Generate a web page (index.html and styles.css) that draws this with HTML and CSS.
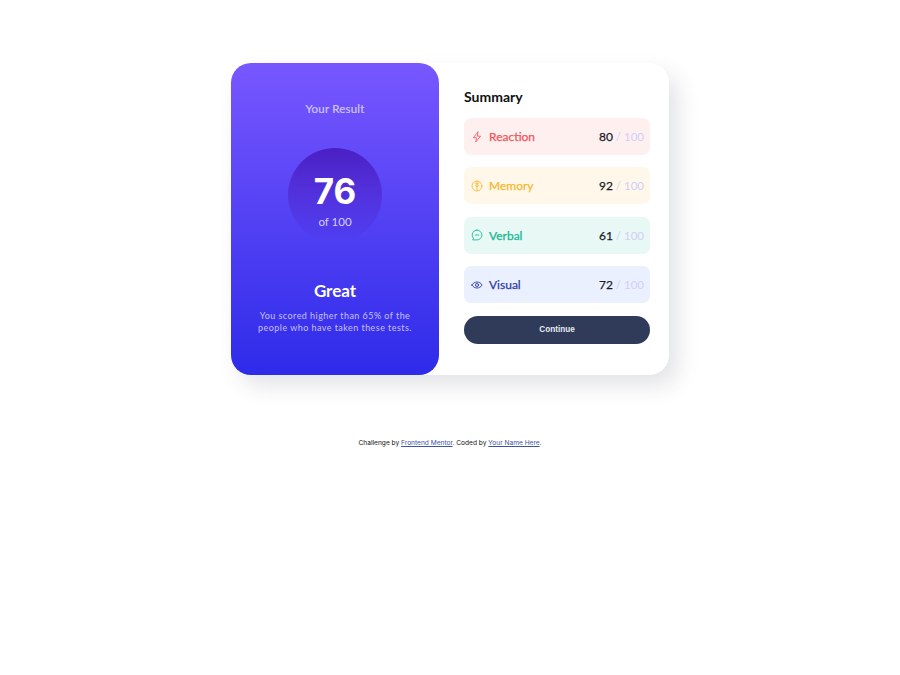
FILE: index.html
```html
<!DOCTYPE html>
<html lang="en">
<head>
<meta charset="utf-8">
<title>Results summary</title>
<link rel="stylesheet" href="styles.css">
</head>
<body>
<main class="card">
  <section class="result">
    <h1 class="result-title">Your Result</h1>
    <div class="score">
      <span class="score-value">76</span>
      <span class="score-of">of 100</span>
    </div>
    <h2 class="verdict">Great</h2>
    <p class="verdict-text">You scored higher than 65% of the people who have taken these tests.</p>
  </section>
  <section class="summary">
    <h2 class="summary-title">Summary</h2>
    <ul class="rows">
      <li class="row row-red">
        <svg class="icon" viewBox="0 0 20 20" fill="none" stroke="currentColor" stroke-width="1.4" stroke-linecap="round" stroke-linejoin="round"><path d="M11.500 1.800 4 11.200h5L8 18.200l8-9.600h-5.300L11.500 1.800Z"/></svg>
        <span class="row-label">Reaction</span>
        <span class="row-score"><b>80</b><i>/ 100</i></span>
      </li>
      <li class="row row-yellow">
        <svg class="icon" viewBox="0 0 20 20" fill="none" stroke="currentColor" stroke-width="1.4" stroke-linecap="round" stroke-linejoin="round"><circle cx="10" cy="10" r="8.300"/><path d="M10 2.500v15M10 7 7 5M10 7l3-2M10 11l3-2M10 11 7 9"/></svg>
        <span class="row-label">Memory</span>
        <span class="row-score"><b>92</b><i>/ 100</i></span>
      </li>
      <li class="row row-green">
        <svg class="icon" viewBox="0 0 20 20" fill="none" stroke="currentColor" stroke-width="1.4" stroke-linecap="round" stroke-linejoin="round"><path d="M10 1.800a8.200 8.200 0 0 1 0 16.400H2.800l1.500-2.400A8.200 8.200 0 0 1 10 1.800Z"/><path d="M7 10h6"/></svg>
        <span class="row-label">Verbal</span>
        <span class="row-score"><b>61</b><i>/ 100</i></span>
      </li>
      <li class="row row-blue">
        <svg class="icon" viewBox="0 0 20 20" fill="none" stroke="currentColor" stroke-width="1.500" stroke-linecap="round" stroke-linejoin="round"><path d="M1.500 10C3.500 6.600 6.500 5 10 5s6.500 1.600 8.500 5c-2 3.400-5 5-8.500 5s-6.500-1.600-8.500-5Z"/><circle cx="10" cy="10" r="2.600"/></svg>
        <span class="row-label">Visual</span>
        <span class="row-score"><b>72</b><i>/ 100</i></span>
      </li>
    </ul>
    <button class="continue" type="button">Continue</button>
  </section>
</main>
<footer class="attribution">Challenge by <a href="#">Frontend Mentor</a>. Coded by <a href="#">Your Name Here</a>.</footer>
</body>
</html>
```
FILE: styles.css
```css
* { box-sizing: border-box; }
html, body { margin: 0; padding: 0; }
body {
  background: #fff;
  font-family: "Lato", "Noto Sans", sans-serif;
  padding-top: 63px;
  min-height: 675px;
  display: flex;
  flex-direction: column;
  align-items: center;
}
.card {
  display: flex;
  width: 438px;
  height: 312px;
  background: #fff;
  border-radius: 20px;
  box-shadow: 9px 11px 22px rgba(40, 45, 70, .13);
}
.result {
  width: 208px;
  flex: none;
  border-radius: 20px;
  background: linear-gradient(180deg, #7857ff 0%, #2e2be9 100%);
  display: flex;
  flex-direction: column;
  align-items: center;
  padding-top: 38px;
  color: #fff;
}
.result-title {
  margin: 0;
  font-size: 11.500px;
  line-height: 16px;
  font-weight: 400;
  letter-spacing: .2px;
  color: #cfc5ff;
  -webkit-text-stroke: .2px #cfc5ff;
}
.score {
  margin-top: 31px;
  width: 94px;
  height: 94px;
  border-radius: 50%;
  background: linear-gradient(180deg, #4a1fc4 0%, rgba(72, 30, 210, 0) 100%);
  display: flex;
  flex-direction: column;
  align-items: center;
}
.score-value {
  margin-top: 20px;
  font-family: "Inter", sans-serif;
  font-size: 35px;
  line-height: 46px;
  font-weight: 700;
}
.score-of {
  font-size: 11.500px;
  line-height: 16px;
  color: #d6d0fc;
}
.verdict {
  margin: 38px 0 0;
  font-size: 17px;
  line-height: 22px;
  font-weight: 700;
}
.verdict-text {
  margin: 8px 0 0;
  width: 175px;
  text-align: center;
  font-size: 9px;
  line-height: 11.500px;
  letter-spacing: .45px;
  color: #c8c0ff;
}
.summary {
  flex: 1;
  padding: 25px 19px 0 25px;
}
.summary-title {
  margin: 0;
  font-size: 14px;
  line-height: 18px;
  font-weight: 700;
  color: #111;
}
.rows {
  list-style: none;
  margin: 12px 0 0;
  padding: 0;
  display: flex;
  flex-direction: column;
  gap: 12.400px;
}
.row {
  height: 37px;
  border-radius: 7px;
  padding: 0 6px 0 7px;
  display: flex;
  align-items: center;
  font-size: 12px;
}
.icon { width: 12px; height: 12px; flex: none; }
.row-label { margin-left: 6px; font-weight: 400; -webkit-text-stroke: .25px currentColor; }
.row-score { margin-left: auto; display: flex; align-items: center; gap: 3px; }
.row-score b { font-weight: 400; color: #1b1b2b; -webkit-text-stroke: .25px currentColor; }
.row-score i { font-style: normal; font-size: 11.500px; font-weight: 400; color: #d3cdf8; }
.row-red { background: #fff0f0; color: #f0565a; }
.row-yellow { background: #fff8ea; color: #f5b82e; }
.row-green { background: #e8f8f4; color: #14b892; }
.row-blue { background: #ebf0ff; color: #2b3aa6; }
.continue {
  display: block;
  width: 100%;
  height: 28px;
  margin-top: 12.800px;
  border: 0;
  border-radius: 14px;
  background: #303b5a;
  color: #e8eaf2;
  font-family: "Liberation Sans", Arial, sans-serif;
  font-size: 8.200px;
  font-weight: 700;
}
.attribution {
  margin-top: 63px;
  font-family: "Inter", sans-serif;
  font-size: 6.600px;
  line-height: 11px;
  color: #111;
}
.attribution a { color: #3e52a3; }
```
